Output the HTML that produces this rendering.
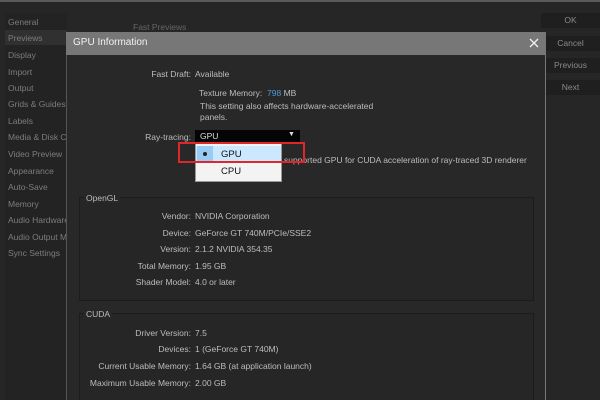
<!DOCTYPE html>
<html style="overflow:hidden;width:600px;height:400px"><head><style>
*{margin:0;padding:0;box-sizing:border-box}
body{width:600px;height:400px;background:#262626;font-family:"Liberation Sans",sans-serif;font-size:8.5px;color:#bdbdbd;position:relative;overflow:hidden}
.a{position:absolute;white-space:nowrap}
.side{position:absolute;left:5px;top:13px;width:62px;height:387px;background:#232323}
.si{position:absolute;left:3px;color:#7d7d7d;font-size:8.5px}
.btn{position:absolute;left:541px;width:59px;height:15px;background:#1f1f1f;color:#8a8a8a;text-align:center;line-height:15px;font-size:8.5px}
.r{position:absolute;text-align:right;width:120px;white-space:nowrap}
.v{position:absolute;white-space:nowrap}
.grp{position:absolute;left:79px;width:455px;border:1px solid #1c1c1c;background:#262626}
</style></head><body>
<div class="a" style="left:0;top:0;width:600px;height:2px;background:#5a5a5a"></div>
<div class="side"></div>
<div class="a" style="left:5px;top:30px;width:62px;height:15px;background:#303030"></div>
<div class="si" style="top:17px;left:8px">General</div>
<div class="si" style="top:33px;left:8px">Previews</div>
<div class="si" style="top:50px;left:8px">Display</div>
<div class="si" style="top:67px;left:8px">Import</div>
<div class="si" style="top:83px;left:8px">Output</div>
<div class="si" style="top:99px;left:8px">Grids &amp; Guides</div>
<div class="si" style="top:116px;left:8px">Labels</div>
<div class="si" style="top:132px;left:8px">Media &amp; Disk C</div>
<div class="si" style="top:149px;left:8px">Video Preview</div>
<div class="si" style="top:166px;left:8px">Appearance</div>
<div class="si" style="top:182px;left:8px">Auto-Save</div>
<div class="si" style="top:199px;left:8px">Memory</div>
<div class="si" style="top:215px;left:8px">Audio Hardware</div>
<div class="si" style="top:232px;left:8px">Audio Output M</div>
<div class="si" style="top:248px;left:8px">Sync Settings</div>
<div class="a" style="left:133px;top:22px;color:#666">Fast Previews</div>
<div class="btn" style="top:13px">OK</div>
<div class="btn" style="top:36px">Cancel</div>
<div class="btn" style="top:58px">Previous</div>
<div class="btn" style="top:80px">Next</div>

<div class="a" style="left:66px;top:32px;width:480px;height:368px;background:#282828;border-left:1px solid #555;border-right:1px solid #777"></div>
<div class="a" style="left:66px;top:32px;width:480px;height:23px;background:#777777"></div>
<div class="a" style="left:73px;top:37px;font-size:10px;color:#f2f2f2">GPU Information</div>
<svg class="a" style="left:529px;top:38px" width="10" height="10" viewBox="0 0 10 10"><path d="M1 1L9 9M9 1L1 9" stroke="#f2f2f2" stroke-width="1.3"/></svg>

<div class="r" style="left:71px;top:69px">Fast Draft:</div><div class="v" style="left:195px;top:69px">Available</div>
<div class="v" style="left:199px;top:88px">Texture Memory: <span style="color:#4a9bd8">&nbsp;798</span> MB</div>
<div class="v" style="left:200px;top:101px">This setting also affects hardware-accelerated</div>
<div class="v" style="left:200px;top:112px">panels.</div>
<div class="r" style="left:71px;top:132px">Ray-tracing:</div>
<div class="a" style="left:195px;top:130px;width:105px;height:13px;background:#050505"></div>
<div class="a" style="left:200px;top:131px;color:#ddd">GPU</div>
<div class="a" style="left:288px;top:131px;color:#ddd;font-size:7px">▼</div>
<div class="v" style="left:284px;top:155px">supported GPU for CUDA acceleration of ray-traced 3D renderer</div>
<div class="a" style="left:195px;top:143px;width:87px;height:39px;background:#f3f3f3;border:1px solid #999"></div>
<div class="a" style="left:196px;top:146px;width:85px;height:15px;background:#cce8ff"></div>
<div class="a" style="left:197px;top:146px;width:16px;height:15px;background:#99ccf5"></div>
<div class="a" style="left:203px;top:152px;width:4px;height:4px;border-radius:2px;background:#222"></div>
<div class="a" style="left:221px;top:149px;color:#111;font-size:9.5px">GPU</div>
<div class="a" style="left:221px;top:166px;color:#111;font-size:9.5px">CPU</div>
<div class="a" style="left:178px;top:142px;width:127px;height:21px;border:2px solid #e0262a"></div>

<div class="grp" style="top:197px;height:104px"></div>
<div class="a" style="left:84px;top:193px;padding:0 2px;background:#282828">OpenGL</div>
<div class="r" style="left:71px;top:211px">Vendor:</div><div class="v" style="left:195px;top:211px">NVIDIA Corporation</div>
<div class="r" style="left:71px;top:228px">Device:</div><div class="v" style="left:195px;top:228px">GeForce GT 740M/PCIe/SSE2</div>
<div class="r" style="left:71px;top:244px">Version:</div><div class="v" style="left:195px;top:244px">2.1.2 NVIDIA 354.35</div>
<div class="r" style="left:71px;top:261px">Total Memory:</div><div class="v" style="left:195px;top:261px">1.95 GB</div>
<div class="r" style="left:71px;top:277px">Shader Model:</div><div class="v" style="left:195px;top:277px">4.0 or later</div>

<div class="grp" style="top:313px;height:87px;border-bottom:none"></div>
<div class="a" style="left:84px;top:309px;padding:0 2px;background:#282828">CUDA</div>
<div class="r" style="left:71px;top:328px">Driver Version:</div><div class="v" style="left:195px;top:328px">7.5</div>
<div class="r" style="left:71px;top:344px">Devices:</div><div class="v" style="left:195px;top:344px">1 (GeForce GT 740M)</div>
<div class="r" style="left:71px;top:361px">Current Usable Memory:</div><div class="v" style="left:195px;top:361px">1.64 GB (at application launch)</div>
<div class="r" style="left:71px;top:378px">Maximum Usable Memory:</div><div class="v" style="left:195px;top:378px">2.00 GB</div>
</body></html>
